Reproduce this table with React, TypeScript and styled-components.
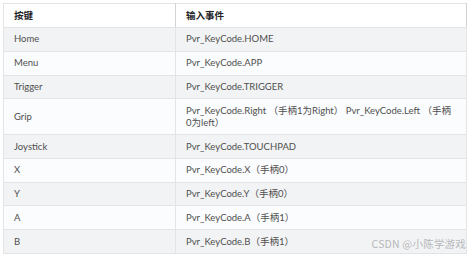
import React from "react";
import styled, { createGlobalStyle } from "styled-components";

const Global = createGlobalStyle`
  html, body {
    margin: 0;
    padding: 0;
    background: #ffffff;
  }
  body {
    font-family: Lato, "Noto Sans CJK SC", sans-serif;
  }
`;

const Page = styled.div`
  position: relative;
  width: 474px;
  height: 254px;
  overflow: hidden;
  padding: 3px 7px 0 3px;
  box-sizing: border-box;
  background: #ffffff;
`;

const Table = styled.table`
  width: 464px;
  border-collapse: collapse;
  table-layout: fixed;
  font-size: 9.5px;
  line-height: 12px;
  color: #4f4f4f;
`;

const HeadCell = styled.th<{ $w?: number }>`
  box-sizing: border-box;
  width: ${(p) => (p.$w ? `${p.$w}px` : "auto")};
  text-align: left;
  font-weight: 700;
  color: #222226;
  background: #ffffff;
  padding: 5.5px 10px;
  border: 1px solid #e3e4e6;
  border-right-color: #d2d3d5;
`;

const Row = styled.tr<{ $shade: boolean }>`
  background: ${(p) => (p.$shade ? "#f2f3f4" : "#fbfcfd")};
`;

const Cell = styled.td`
  padding: 5.4px 10px;
  border: 1px solid #e3e4e6;
  vertical-align: middle;
`;

const Watermark = styled.div`
  position: absolute;
  right: 8px;
  bottom: 3px;
  font-family: "Noto Sans CJK SC", sans-serif;
  font-size: 10.5px;
  line-height: 14px;
  color: rgba(160, 162, 166, 0.75);
  letter-spacing: 0.2px;
`;

const rows: { key: string; event: React.ReactNode }[] = [
  { key: "Home", event: "Pvr_KeyCode.HOME" },
  { key: "Menu", event: "Pvr_KeyCode.APP" },
  { key: "Trigger", event: "Pvr_KeyCode.TRIGGER" },
  {
    key: "Grip",
    event: (
      <>
        Pvr_KeyCode.Right （手柄1为Right） Pvr_KeyCode.Left （手柄
        <br />
        0为left）
      </>
    ),
  },
  { key: "Joystick", event: "Pvr_KeyCode.TOUCHPAD" },
  { key: "X", event: "Pvr_KeyCode.X（手柄0）" },
  { key: "Y", event: "Pvr_KeyCode.Y（手柄0）" },
  { key: "A", event: "Pvr_KeyCode.A（手柄1）" },
  { key: "B", event: "Pvr_KeyCode.B（手柄1）" },
];

export default function App() {
  return (
    <Page>
      <Global />
      <Table>
        <thead>
          <tr>
            <HeadCell $w={172}>按键</HeadCell>
            <HeadCell>输入事件</HeadCell>
          </tr>
        </thead>
        <tbody>
          {rows.map((r, i) => (
            <Row key={r.key} $shade={i % 2 === 0}>
              <Cell>{r.key}</Cell>
              <Cell>{r.event}</Cell>
            </Row>
          ))}
        </tbody>
      </Table>
      <Watermark>CSDN @小陈学游戏</Watermark>
    </Page>
  );
}
